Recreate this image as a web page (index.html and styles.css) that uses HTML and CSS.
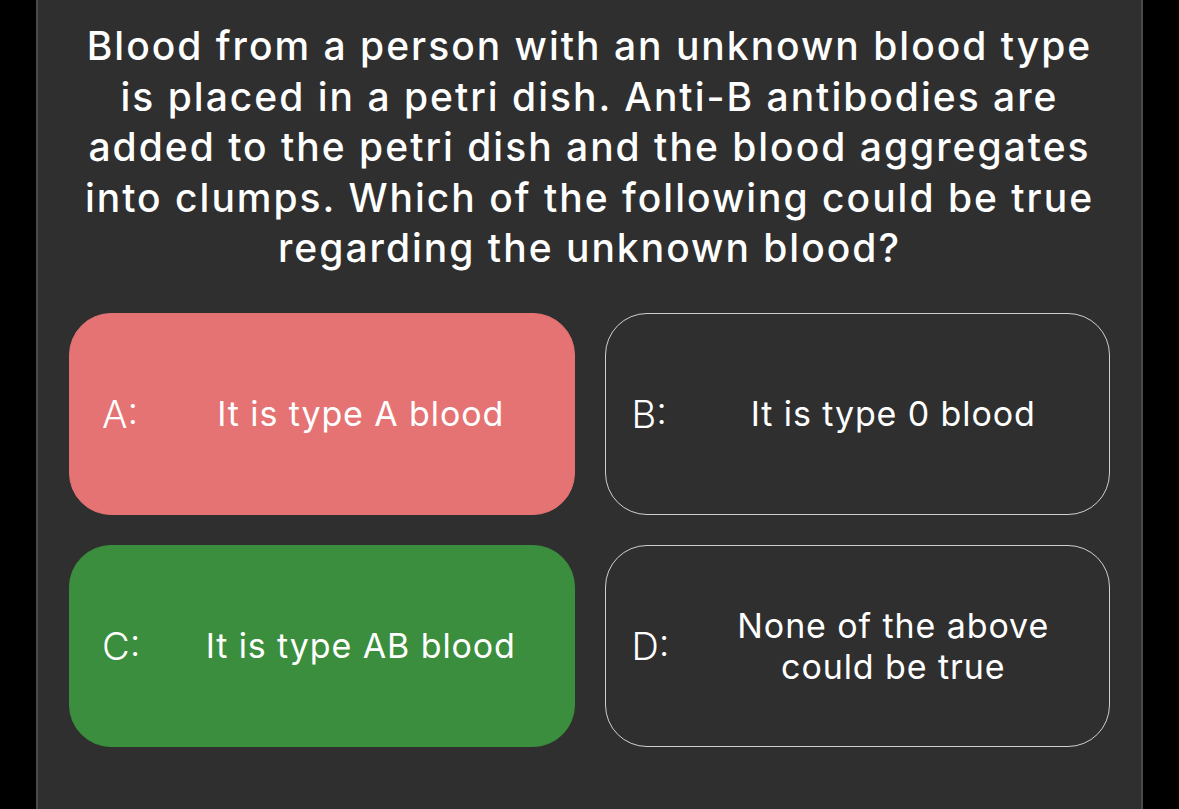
FILE: index.html
```html
<!DOCTYPE html>
<html lang="en">
<head>
    <meta charset="UTF-8">
    <meta name="viewport" content="width=device-width, initial-scale=1.0">
    <title>Quiz</title>
    <link rel="stylesheet" href="styles.css">
</head>
<body>
    <div class="panel">
        <p class="pregunta">Blood from a person with an unknown blood type<br>is placed in a petri dish. Anti-B antibodies are<br>added to the petri dish and the blood aggregates<br>into clumps. Which of the following could be true<br>regarding the unknown blood?</p>

        <div class="opciones">
            <div class="opcion incorrecta">
                <span class="letra">A:</span>
                <span class="texto">It is type A blood</span>
            </div>
            <div class="opcion">
                <span class="letra">B:</span>
                <span class="texto">It is type 0 blood</span>
            </div>
            <div class="opcion correcta">
                <span class="letra">C:</span>
                <span class="texto">It is type AB blood</span>
            </div>
            <div class="opcion">
                <span class="letra">D:</span>
                <span class="texto">None of the above<br>could be true</span>
            </div>
        </div>
    </div>
</body>
</html>
```

FILE: styles.css
```css
html, body {
    height: 100%;
}
body {
    font-family: Inter, "Noto Sans", sans-serif;
    margin: 0;
    padding: 0;
    background-color: #000;
    color: #fff;
}
.panel {
    box-sizing: border-box;
    width: 1107px;
    height: 100%;
    margin-left: 36px;
    background-color: #2f2f2f;
    border-left: 2px solid #4a4a4a;
    border-right: 2px solid #4a4a4a;
    padding: 21px 31px 0;
}
.pregunta {
    margin: 0;
    font-size: 39px;
    font-weight: 500;
    line-height: 50.5px;
    letter-spacing: 2px;
    text-align: center;
}
.opciones {
    display: grid;
    grid-template-columns: 1fr 1fr;
    grid-auto-rows: 202px;
    gap: 30px;
    margin-top: 39px;
}
.opcion {
    box-sizing: border-box;
    display: flex;
    align-items: center;
    padding: 0 34px 0 32px;
    border-radius: 42px;
    border: 1px solid #cfcfcf;
}
.opcion:nth-child(even) {
    padding-left: 26px;
}
.incorrecta {
    background-color: #e57373;
    border-color: #e57373;
}
.correcta {
    background-color: #3b8e3d;
    border-color: #3b8e3d;
}
.letra {
    width: 80px;
    flex-shrink: 0;
    font-size: 38px;
    font-weight: 300;
}
.texto {
    flex: 1;
    text-align: center;
    font-size: 34px;
    font-weight: 400;
    line-height: 41px;
    letter-spacing: 0.9px;
}
```
